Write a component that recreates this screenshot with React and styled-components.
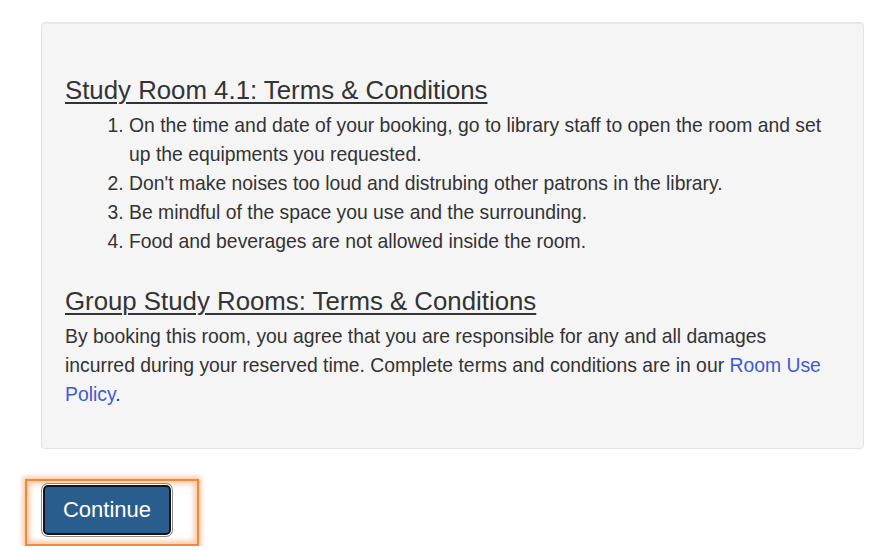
import React from "react";
import styled, { createGlobalStyle } from "styled-components";

const GlobalStyle = createGlobalStyle`
  body {
    margin: 0;
    background: #fff;
    font-family: "Liberation Sans", Arial, sans-serif;
    color: #333;
  }
`;

const Page = styled.div`
  padding: 22px 9px 0 25px;
`;

const Well = styled.div`
  margin-left: 16px;
  padding: 54px 23px 39px 23px;
  background: #f5f5f5;
  border: 1px solid #e3e3e3;
  border-radius: 4px;
  box-shadow: inset 0 1px 1px rgba(0, 0, 0, 0.05);
`;

const Heading = styled.h2`
  margin: 0;
  font-size: 25.8px;
  line-height: 26px;
  font-weight: normal;
  text-decoration: underline;
  text-underline-offset: 3px;
  text-decoration-thickness: 2px;
  color: #333;
  margin-top: ${(p) => (p.$spaced ? "32px" : "0")};
`;

const TermsList = styled.ol`
  margin: 8px 0 0;
  padding-left: 64px;
  font-size: 19.35px;
  line-height: 29px;

  li::marker {
    color: #333;
  }
`;

const Body = styled.p`
  margin: 8px 0 0;
  font-size: 19.35px;
  line-height: 29px;
`;

const Link = styled.a`
  color: #3c5ad6;
  text-decoration: none;
`;

const FocusBox = styled.div`
  display: inline-block;
  margin-top: 30px;
  padding: 2px 26px 9px 14px;
  border: 2px solid #f0883e;
  box-shadow: 0 0 5px 2px rgba(245, 150, 80, 0.6),
    inset 0 0 5px 3px rgba(245, 150, 80, 0.5);
`;

const Button = styled.button`
  display: block;
  width: 128px;
  height: 50px;
  margin: 2px 0 0 2px;
  padding: 0;
  background: #295d8d;
  color: #fff;
  border: 2px solid #141414;
  border-radius: 5px;
  box-shadow: 0 0 0 1px #fff, 0 0 0 2px #8a8a8a;
  font-family: "Liberation Sans", Arial, sans-serif;
  font-size: 22px;
  cursor: pointer;
`;

export default function App() {
  return (
    <>
      <GlobalStyle />
      <Page>
        <Well>
          <Heading>Study Room 4.1: Terms &amp; Conditions</Heading>
          <TermsList>
            <li>
              On the time and date of your booking, go to library staff to open
              the room and set up the equipments you requested.
            </li>
            <li>
              Don't make noises too loud and distrubing other patrons in the
              library.
            </li>
            <li>Be mindful of the space you use and the surrounding.</li>
            <li>Food and beverages are not allowed inside the room.</li>
          </TermsList>
          <Heading $spaced>Group Study Rooms: Terms &amp; Conditions</Heading>
          <Body>
            By booking this room, you agree that you are responsible for any
            and all damages incurred during your reserved time. Complete terms
            and conditions are in our <Link href="#">Room Use Policy</Link>.
          </Body>
        </Well>
        <FocusBox>
          <Button>Continue</Button>
        </FocusBox>
      </Page>
    </>
  );
}
